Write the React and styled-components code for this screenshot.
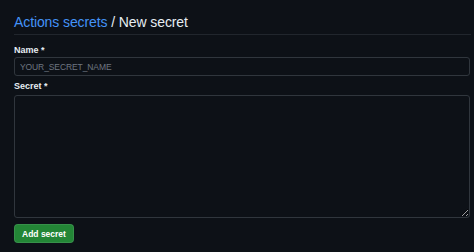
import React from "react";
import styled, { createGlobalStyle } from "styled-components";

const GlobalStyle = createGlobalStyle`
  html, body {
    margin: 0;
    padding: 0;
    background: #0d1117;
  }
  body {
    font-family: "Liberation Sans", Arial, sans-serif;
    color: #e6edf3;
  }
`;

const Page = styled.div`
  width: 474px;
  height: 252px;
  box-sizing: border-box;
  padding: 0 3px 0 14px;
  overflow: hidden;
`;

const Header = styled.header`
  height: 35px;
  display: flex;
  align-items: flex-end;
  padding-bottom: 5px;
  box-sizing: border-box;
  border-bottom: 1px solid #21262d;
`;

const Title = styled.h1`
  margin: 0;
  font-size: 14px;
  font-weight: 400;
  line-height: 1;
  letter-spacing: -0.1px;
  color: #e6edf3;
`;

const Crumb = styled.a`
  color: #4493f8;
  text-decoration: none;
`;

const Form = styled.form`
  display: flex;
  flex-direction: column;
  padding-top: 10px;
  padding-right: 1px;
`;

const Label = styled.label`
  font-size: 9px;
  font-weight: 700;
  line-height: 11px;
  color: #e6edf3;
  margin-bottom: ${({ $gap }) => $gap}px;
`;

const Input = styled.input`
  box-sizing: border-box;
  height: 19px;
  padding: 0 5px;
  background: #0d1117;
  border: 1px solid #30363d;
  border-radius: 3px;
  color: #e6edf3;
  font-family: inherit;
  font-size: 8.5px;
  letter-spacing: -0.1px;
  outline: none;
  margin-bottom: 5px;

  &::placeholder {
    color: #6e7681;
  }
`;

const TextArea = styled.textarea`
  box-sizing: border-box;
  height: 123px;
  padding: 6px;
  background: #0d1117;
  border: 1px solid #30363d;
  border-radius: 3px;
  color: #e6edf3;
  font-family: inherit;
  font-size: 8px;
  outline: none;
  resize: vertical;
  margin-bottom: 6px;
`;

const Button = styled.button`
  align-self: flex-start;
  height: 19px;
  padding: 0 7px;
  background: #238636;
  border: 1px solid rgba(240, 246, 252, 0.1);
  border-radius: 4px;
  color: #ffffff;
  font-family: inherit;
  font-size: 8.5px;
  font-weight: 700;
  cursor: pointer;
`;

export default function App() {
  return (
    <Page>
      <GlobalStyle />
      <Header>
        <Title>
          <Crumb href="#">Actions secrets</Crumb> / New secret
        </Title>
      </Header>
      <Form onSubmit={(e) => e.preventDefault()}>
        <Label htmlFor="name" $gap={1}>Name *</Label>
        <Input id="name" placeholder="YOUR_SECRET_NAME" />
        <Label htmlFor="secret" $gap={3}>Secret *</Label>
        <TextArea id="secret" />
        <Button type="submit">Add secret</Button>
      </Form>
    </Page>
  );
}
